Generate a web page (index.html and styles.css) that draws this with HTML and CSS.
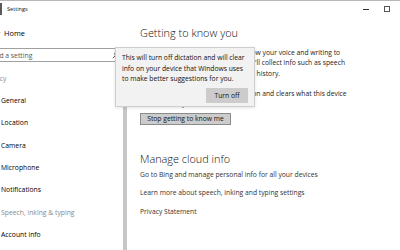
FILE: index.html
```html
<!DOCTYPE html>
<html>
<head>
<meta charset="utf-8">
<link rel="stylesheet" href="styles.css">
</head>
<body>
<div class="window">
  <header class="titlebar">
    <span class="app-mark"></span>
    <span class="title">Settings</span>
    <span class="spacer"></span>
    <span class="win-min"></span>
    <span class="win-max"></span>
  </header>
  <div class="frame">
    <nav class="nav">
      <div class="nav-inner">
        <div class="home">
          <svg class="home-icon" width="11" height="10" viewBox="0 0 11 10"><path d="M1 5 L5.5 1 L10 5 M2.5 4 V9.5 H8.5 V4" fill="none" stroke="#222" stroke-width="1.2"/></svg>
          <span>Home</span>
        </div>
        <div class="search">
          <span class="search-text">Find a setting</span>
          <svg class="search-icon" width="8" height="8" viewBox="0 0 8 8"><circle cx="5" cy="3" r="2.3" fill="none" stroke="#444" stroke-width="0.8"/><path d="M3.3 4.7 L0.8 7.2" stroke="#444" stroke-width="0.9"/></svg>
        </div>
        <div class="section">Privacy</div>
        <ul class="items">
          <li>General</li>
          <li>Location</li>
          <li>Camera</li>
          <li>Microphone</li>
          <li>Notifications</li>
          <li class="current">Speech, inking &amp; typing</li>
          <li>Account info</li>
        </ul>
      </div>
    </nav>
    <div class="scrollbar"><div class="thumb"></div></div>
    <main class="content">
      <h1 class="heading">Getting to know you</h1>
      <p class="para">Windows and Cortana can get to know your voice and writing to<br>make better suggestions for you. We'll collect info such as speech<br>and handwriting patterns and typing history.</p>
      <p class="para">Turning this off also turns off dictation and clears what this device<br>knows about you.</p>
      <button class="btn stop">Stop getting to know me</button>
      <h2 class="heading sub">Manage cloud info</h2>
      <ul class="links">
        <li>Go to Bing and manage personal info for all your devices</li>
        <li>Learn more about speech, inking and typing settings</li>
        <li>Privacy Statement</li>
      </ul>
    </main>
  </div>
  <div class="flyout">
    <p class="flyout-text">This will turn off dictation and will clear<br>info on your device that Windows uses<br>to make better suggestions for you.</p>
    <div class="flyout-actions"><button class="btn turnoff">Turn off</button></div>
  </div>
</div>
</body>
</html>
```

FILE: styles.css
```css
* { box-sizing: border-box; }
html, body { margin: 0; padding: 0; }
body {
  width: 400px;
  height: 250px;
  overflow: hidden;
  background: #fff;
  color: #000;
  font-family: "Open Sans", "Noto Sans", sans-serif;
}
.window {
  position: relative;
  height: 250px;
  display: flex;
  flex-direction: column;
}
.titlebar {
  height: 17px;
  flex: none;
  border-top: 1px solid #b8b8b8;
  display: flex;
  align-items: center;
}
.app-mark {
  width: 2px;
  height: 12px;
  background: #5a5a5a;
}
.title {
  font-size: 5.6px;
  margin-left: 5px;
  color: #111;
}
.spacer { flex: 1; }
.win-min {
  width: 6px;
  height: 1px;
  background: #333;
  margin-right: 15px;
}
.win-max {
  width: 6px;
  height: 6px;
  border: 1px solid #555;
  margin-right: 10px;
}
.frame {
  flex: 1;
  display: flex;
  min-height: 0;
}
.nav {
  width: 123px;
  flex: none;
  overflow: hidden;
}
.nav-inner {
  margin-left: -47px;
  width: 170px;
  padding-top: 8px;
  font-size: 6.8px;
}
.home {
  height: 16px;
  display: flex;
  align-items: center;
}
.home-icon { margin-left: 37px; }
.home span { margin-left: 3px; font-size: 7.4px; }
.search {
  margin-top: 7px;
  margin-left: 30px;
  width: 134px;
  height: 14px;
  border: 1px solid #a0a0a0;
  display: flex;
  align-items: center;
  padding: 0 1px 0 6px;
  color: #555;
}
.search-text { flex: 1; }
.search-icon { margin-right: -5px; }
.section {
  margin-top: 9px;
  height: 16px;
  line-height: 16px;
  padding-left: 31px;
  color: #8a8a8a;
}
.items {
  list-style: none;
  margin: 3px 0 0;
  padding: 0;
}
.items li {
  height: 22.33px;
  line-height: 22.33px;
  padding-left: 48px;
  white-space: nowrap;
}
.items li.current { color: #8a8a8a; }
.scrollbar {
  width: 4px;
  flex: none;
  margin-right: 13px;
}
.thumb {
  margin-top: 40px;
  height: 200px;
  background: #c6c6c6;
}
.content {
  flex: 1;
  font-size: 6.75px;
  color: #222;
}
.heading {
  margin: 9px 0 0;
  font-size: 10.9px;
  font-weight: 300;
  line-height: 14px;
  height: 14px;
  color: #111;
}
.para {
  margin: 7.75px 0 0;
  line-height: 10.5px;
  white-space: nowrap;
}
.para + .para { margin-top: 9.5px; }
.btn {
  font-family: inherit;
  font-size: 6.75px;
  color: #111;
  background: #cccccc;
  border: 1px solid #8c8c8c;
  padding: 0;
  margin: 0;
}
.stop {
  display: block;
  margin-top: 3px;
  width: 91px;
  height: 12px;
  line-height: 10px;
}
.sub { margin-top: 27px; }
.links {
  list-style: none;
  margin: 0;
  padding: 0;
  color: #333;
}
.links li {
  height: 18.5px;
  line-height: 18.5px;
}
.flyout {
  position: absolute;
  left: 115px;
  top: 47px;
  width: 140px;
  height: 60px;
  background: #f2f2f2;
  border: 1px solid #cfcfcf;
  box-shadow: 0 1px 3px rgba(0,0,0,0.12);
  padding: 5px 6px 3px 6px;
  display: flex;
  flex-direction: column;
}
.flyout-text {
  margin: 0;
  font-size: 6.75px;
  line-height: 10.5px;
  color: #111;
  white-space: nowrap;
}
.flyout-actions {
  margin-top: auto;
  display: flex;
  justify-content: flex-end;
}
.turnoff {
  width: 42px;
  height: 15px;
  border: none;
}
```
